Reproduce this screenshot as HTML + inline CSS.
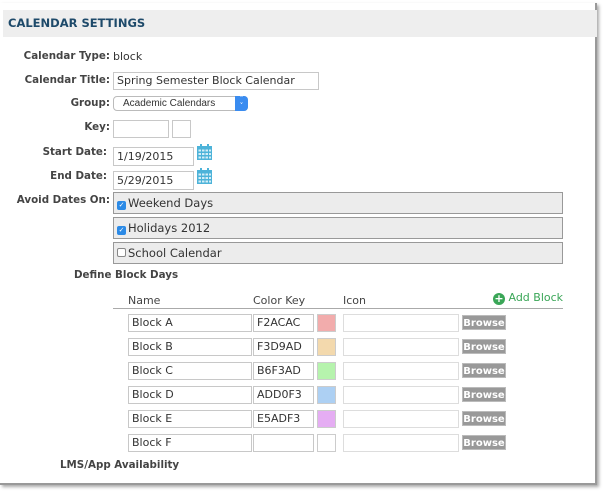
<!DOCTYPE html>
<html><head><style>
*{box-sizing:border-box;margin:0;padding:0}
body{width:605px;height:493px;background:#fff;position:relative;overflow:hidden;font-family:"DejaVu Sans","Liberation Sans",sans-serif;color:#333}
.a{position:absolute}
.page{position:absolute;left:0;top:3px;width:597px;height:482px;background:#fff;border-right:2px solid #999;border-bottom:2px solid #999;box-shadow:2px 2px 3px #aaa}
.hdr{left:3px;top:10px;width:594px;height:27px;background:#eee}
.hdr span{position:absolute;left:5px;top:6px;font-size:11.5px;font-weight:bold;color:#1e4a6a}
.lbl{font-size:10.3px;font-weight:bold;color:#444;text-align:right;width:110px;left:0}
.inp{border:1px solid #c8c8c8;background:#fff;font-size:11px;padding-left:3px;line-height:16px;color:#333}
.box{left:113px;width:450px;height:22px;background:#ececec;border:1px solid #999;font-size:11.5px;line-height:20px;padding-left:3px}
.cb{display:inline-block;width:9px;height:9px;border-radius:2px;vertical-align:0px;margin-right:2px}
.on{background:#2b8ae6;color:#fff;font-size:7px;line-height:9px;text-align:center}
.off{border:1px solid #888;background:#fff}
.th{font-size:11px;color:#444}
.br{width:44px;height:15px;background:#999;color:#fff;font-size:10px;font-weight:bold;text-align:center;line-height:15px;border:1px solid #bbb}
</style></head><body>
<div class="page"></div>
<div class="a hdr"><span>CALENDAR SETTINGS</span></div>
<div class="a lbl" style="top:50px">Calendar Type:</div>
<div class="a" style="left:113px;top:50px;font-size:11px">block</div>
<div class="a lbl" style="top:74px">Calendar Title:</div>
<div class="a inp" style="left:113px;top:72px;width:206px;height:18px">Spring Semester Block Calendar</div>
<div class="a lbl" style="top:97px">Group:</div>
<div class="a" style="left:113px;top:96px;width:135px;height:15px;border:1px solid #bbb;border-radius:4px;font-family:'Liberation Sans',sans-serif;font-size:10px;line-height:13px;padding-left:9px;background:#fff">Academic Calendars</div>
<div class="a" style="left:235px;top:96px;width:13px;height:15px;background:#3a8cf0;border-radius:0 4px 4px 0;color:#fff;font-size:7px;text-align:center;line-height:7px">˄<br>˅</div>
<div class="a lbl" style="top:121px">Key:</div>
<div class="a inp" style="left:113px;top:120px;width:56px;height:18px"></div>
<div class="a inp" style="left:172px;top:120px;width:19px;height:18px"></div>
<div class="a lbl" style="top:146px;width:107px">Start Date:</div>
<div class="a inp" style="left:113px;top:147px;width:81px;height:19px;line-height:18px">1/19/2015</div>
<div class="a lbl" style="top:170px;width:107px">End Date:</div>
<div class="a inp" style="left:113px;top:171px;width:81px;height:19px;line-height:18px">5/29/2015</div>
<svg class="a" style="left:197px;top:144px" width="15" height="16"><rect x="0" y="2" width="15" height="14" fill="#4db3d9"/><rect x="3" y="0" width="2" height="4" fill="#4db3d9"/><rect x="10" y="0" width="2" height="4" fill="#4db3d9"/><g fill="#d4eef7"><rect x="1.5" y="5.5" width="2.5" height="2"/><rect x="5" y="5.5" width="2.5" height="2"/><rect x="8.5" y="5.5" width="2.5" height="2"/><rect x="12" y="5.5" width="2" height="2"/><rect x="1.5" y="9" width="2.5" height="2"/><rect x="5" y="9" width="2.5" height="2"/><rect x="8.5" y="9" width="2.5" height="2"/><rect x="12" y="9" width="2" height="2"/><rect x="1.5" y="12.5" width="2.5" height="2"/><rect x="5" y="12.5" width="2.5" height="2"/><rect x="8.5" y="12.5" width="2.5" height="2"/><rect x="12" y="12.5" width="2" height="2"/></g></svg>
<svg class="a" style="left:197px;top:168px" width="15" height="16"><rect x="0" y="2" width="15" height="14" fill="#4db3d9"/><rect x="3" y="0" width="2" height="4" fill="#4db3d9"/><rect x="10" y="0" width="2" height="4" fill="#4db3d9"/><g fill="#d4eef7"><rect x="1.5" y="5.5" width="2.5" height="2"/><rect x="5" y="5.5" width="2.5" height="2"/><rect x="8.5" y="5.5" width="2.5" height="2"/><rect x="12" y="5.5" width="2" height="2"/><rect x="1.5" y="9" width="2.5" height="2"/><rect x="5" y="9" width="2.5" height="2"/><rect x="8.5" y="9" width="2.5" height="2"/><rect x="12" y="9" width="2" height="2"/><rect x="1.5" y="12.5" width="2.5" height="2"/><rect x="5" y="12.5" width="2.5" height="2"/><rect x="8.5" y="12.5" width="2.5" height="2"/><rect x="12" y="12.5" width="2" height="2"/></g></svg>
<div class="a lbl" style="top:194px">Avoid Dates On:</div>
<div class="a box" style="top:192px"><span class="cb on">✓</span>Weekend Days</div>
<div class="a box" style="top:217px"><span class="cb on">✓</span>Holidays 2012</div>
<div class="a box" style="top:242px"><span class="cb off"></span>School Calendar</div>
<div class="a lbl" style="top:269px;width:auto;left:74px;text-align:left">Define Block Days</div>
<div class="a th" style="left:128px;top:294px">Name</div>
<div class="a th" style="left:253px;top:294px">Color Key</div>
<div class="a th" style="left:343px;top:294px">Icon</div>
<div class="a" style="left:493px;top:291px;font-size:11px;color:#3aa657"><span style="display:inline-block;width:12px;height:12px;border-radius:50%;background:#3aa657;color:#fff;font-weight:bold;font-size:11px;line-height:12px;text-align:center;vertical-align:-1px">+</span> Add Block</div>
<div class="a" style="left:113px;top:308px;width:450px;height:1px;background:#aaa"></div>

<div class="a inp" style="left:128px;top:314px;width:124px;height:18px">Block A</div><div class="a inp" style="left:253px;top:314px;width:61px;height:18px">F2ACAC</div><div class="a" style="left:317px;top:314px;width:19px;height:18px;background:#F2ACAC;border:1px solid #ccc"></div><div class="a inp" style="left:343px;top:314px;width:116px;height:18px;border-color:#ddd"></div><div class="a br" style="left:462px;top:315px">Browse</div>
<div class="a inp" style="left:128px;top:338px;width:124px;height:18px">Block B</div><div class="a inp" style="left:253px;top:338px;width:61px;height:18px">F3D9AD</div><div class="a" style="left:317px;top:338px;width:19px;height:18px;background:#F3D9AD;border:1px solid #ccc"></div><div class="a inp" style="left:343px;top:338px;width:116px;height:18px;border-color:#ddd"></div><div class="a br" style="left:462px;top:339px">Browse</div>
<div class="a inp" style="left:128px;top:362px;width:124px;height:18px">Block C</div><div class="a inp" style="left:253px;top:362px;width:61px;height:18px">B6F3AD</div><div class="a" style="left:317px;top:362px;width:19px;height:18px;background:#B6F3AD;border:1px solid #ccc"></div><div class="a inp" style="left:343px;top:362px;width:116px;height:18px;border-color:#ddd"></div><div class="a br" style="left:462px;top:363px">Browse</div>
<div class="a inp" style="left:128px;top:386px;width:124px;height:18px">Block D</div><div class="a inp" style="left:253px;top:386px;width:61px;height:18px">ADD0F3</div><div class="a" style="left:317px;top:386px;width:19px;height:18px;background:#ADD0F3;border:1px solid #ccc"></div><div class="a inp" style="left:343px;top:386px;width:116px;height:18px;border-color:#ddd"></div><div class="a br" style="left:462px;top:387px">Browse</div>
<div class="a inp" style="left:128px;top:410px;width:124px;height:18px">Block E</div><div class="a inp" style="left:253px;top:410px;width:61px;height:18px">E5ADF3</div><div class="a" style="left:317px;top:410px;width:19px;height:18px;background:#E5ADF3;border:1px solid #ccc"></div><div class="a inp" style="left:343px;top:410px;width:116px;height:18px;border-color:#ddd"></div><div class="a br" style="left:462px;top:411px">Browse</div>
<div class="a inp" style="left:128px;top:434px;width:124px;height:18px">Block F</div><div class="a inp" style="left:253px;top:434px;width:61px;height:18px"></div><div class="a" style="left:317px;top:434px;width:19px;height:18px;background:#fff;border:1px solid #ccc"></div><div class="a inp" style="left:343px;top:434px;width:116px;height:18px;border-color:#ddd"></div><div class="a br" style="left:462px;top:435px">Browse</div>

<div class="a lbl" style="top:459px;left:60px;width:auto;text-align:left">LMS/App Availability</div>
</body></html>
